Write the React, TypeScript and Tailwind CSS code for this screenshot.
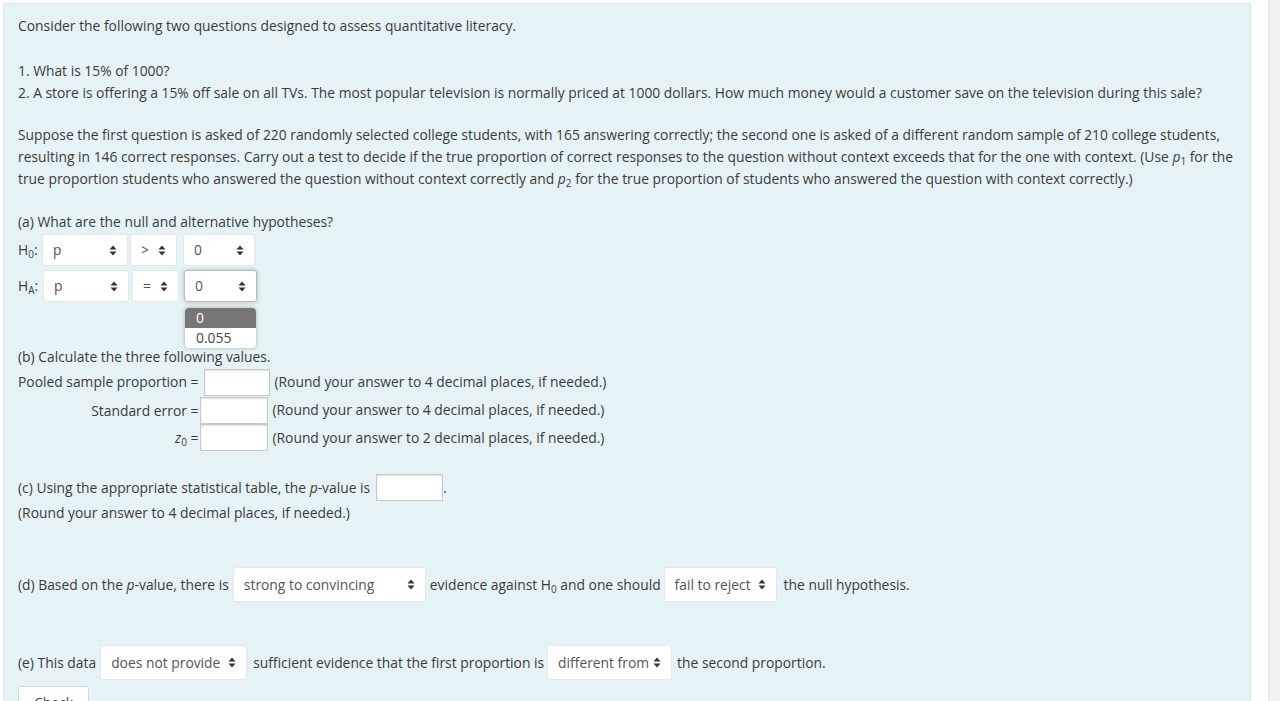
import React from "react";

function Arrows() {
  return (
    <svg width="8" height="11" viewBox="0 0 8 11" className="shrink-0">
      <path d="M4 0.5 L7.5 4.5 L0.5 4.5 Z" fill="#333" />
      <path d="M4 10.5 L7.5 6.5 L0.5 6.5 Z" fill="#333" />
    </svg>
  );
}

function Select({
  value,
  className = "",
  focused = false,
}: {
  value: string;
  className?: string;
  focused?: boolean;
}) {
  return (
    <div
      className={`flex items-center justify-between px-[10px] bg-white rounded-[3px] border ${
        focused
          ? "border-[#bcbcbc] shadow-[0_0_4px_rgba(0,0,0,0.25)]"
          : "border-[#e3e8ea]"
      } ${className}`}
    >
      <span className="text-[#555]">{value}</span>
      <Arrows />
    </div>
  );
}

function Box({ className = "" }: { className?: string }) {
  return (
    <div
      className={`h-[27px] bg-white border border-[#c8c8c8] shadow-[inset_0_1px_2px_rgba(0,0,0,0.12)] ${className}`}
    />
  );
}

const Sub = ({ children }: { children: React.ReactNode }) => (
  <span className="inline-block text-[10px] leading-[10px] relative top-[3px]">{children}</span>
);

export default function App() {
  return (
    <div
      className="flex w-[1280px] h-[701px] overflow-hidden bg-white text-[13.85px] leading-[22px] text-[#3b3b3b]"
      style={{ fontFamily: '"Open Sans", "Noto Sans", sans-serif' }}
    >
      <div className="w-[1251px] shrink-0 pl-[3px] pt-[3px]">
        <div className="h-[720px] bg-[#e5f3f6] border border-[#d3e6ea] rounded-[2px] pl-[14px] pt-[11px]">
          <p>Consider the following two questions designed to assess quantitative literacy.</p>
          <p className="mt-[23px]">1. What is 15% of 1000?</p>
          <p>
            2. A store is offering a 15% off sale on all TVs. The most popular television is normally priced at 1000 dollars. How much money would a customer save on the television during this sale?
          </p>
          <p className="mt-[20px] pr-[10px]">
            Suppose the first question is asked of 220 randomly selected college students, with 165 answering correctly; the second one is asked of a different random sample of 210 college students, resulting in 146 correct responses. Carry out a test to decide if the true proportion of correct responses to the question without context exceeds that for the one with context. (Use <i>p</i>
            <Sub>1</Sub> for the true proportion students who answered the question without context correctly and <i>p</i>
            <Sub>2</Sub> for the true proportion of students who answered the question with context correctly.)
          </p>

          <p className="mt-[21px]">(a) What are the null and alternative hypotheses?</p>
          <div className="flex items-center mt-[1px]">
            <span className="w-[24px]">
              H<Sub>0</Sub>:
            </span>
            <Select value="p" className="w-[86px] h-[32px]" />
            <Select value=">" className="w-[47px] h-[32px] ml-[2px]" />
            <Select value="0" className="w-[72px] h-[32px] ml-[6px]" />
          </div>
          <div className="flex items-center mt-[4px]">
            <span className="w-[25px]">
              H<Sub>A</Sub>:
            </span>
            <Select value="p" className="w-[86px] h-[32px]" />
            <Select value="=" className="w-[47px] h-[32px] ml-[3px]" />
            <div className="relative ml-[5px]">
              <Select value="0" className="w-[73px] h-[32px]" focused />
              <div className="absolute left-[1px] top-[38px] w-[71px] bg-white rounded-[4px] shadow-[0_0_4px_rgba(0,0,0,0.3)] overflow-hidden z-10">
                <div className="h-[20px] leading-[20px] px-[11px] bg-[#767676] text-white">0</div>
                <div className="h-[20px] leading-[20px] px-[11px] text-[#444]">0.055</div>
              </div>
            </div>
          </div>

          <p className="mt-[44px]">(b) Calculate the three following values.</p>
          <div className="grid grid-cols-[auto_auto_1fr] items-center w-fit">
            <span className="text-right pr-[3px]">Pooled sample proportion =</span>
            <Box className="w-[66px] ml-[3px] mt-[1px]" />
            <span className="pl-[4px]">(Round your answer to 4 decimal places, if needed.)</span>
            <span className="text-right pr-[3px] pt-[1px]">Standard error =</span>
            <Box className="w-[68px] -ml-[1px] mt-[1px]" />
            <span className="ml-[2px]">(Round your answer to 4 decimal places, if needed.)</span>
            <span className="text-right pr-[3px]">
              <i>z</i>
              <Sub>0</Sub> =
            </span>
            <Box className="w-[68px] -ml-[1px]" />
            <span className="ml-[2px]">(Round your answer to 2 decimal places, if needed.)</span>
          </div>

          <div className="flex items-center mt-[23px]">
            <span className="pr-[6px]">
              (c) Using the appropriate statistical table, the <i>p</i>-value is
            </span>
            <Box className="w-[67px]" />
            <span>.</span>
          </div>
          <p className="mt-[1px]">(Round your answer to 4 decimal places, if needed.)</p>

          <div className="flex items-center mt-[43px]">
            <span className="pr-[4px]">
              (d) Based on the <i>p</i>-value, there is
            </span>
            <Select value="strong to convincing" className="w-[193px] h-[35px]" />
            <span className="pl-[4px] pr-[3px]">
              evidence against H<Sub>0</Sub> and one should
            </span>
            <Select value="fail to reject" className="w-[113px] h-[35px]" />
            <span className="pl-[7px]">the null hypothesis.</span>
          </div>

          <div className="flex items-center mt-[43px]">
            <span className="pr-[4px]">(e) This data</span>
            <Select value="does not provide" className="w-[147px] h-[35px]" />
            <span className="pl-[6px] pr-[3px]">sufficient evidence that the first proportion is</span>
            <Select value="different from" className="w-[125px] h-[35px]" />
            <span className="pl-[5px]">the second proportion.</span>
          </div>

          <div className="mt-[6px] w-[71px] h-[34px] bg-white border border-[#d0d8da] rounded-[3px] flex items-center justify-center text-[#444]">
            Check
          </div>
        </div>
      </div>
      <div className="w-[18px] shrink-0 bg-white border-r border-[#e4e4e4]" />
      <div className="flex-1 bg-[#f1f1f1]" />
    </div>
  );
}
